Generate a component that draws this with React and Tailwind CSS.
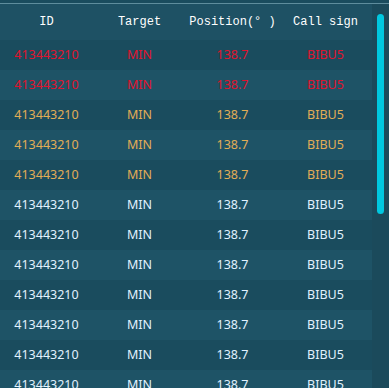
const ROWS = [
  ...Array(2).fill("red"),
  ...Array(3).fill("warn"),
  ...Array(7).fill("normal"),
];

const TEXT_STYLES = {
  red: "text-[#e0142d]",
  warn: "text-[#e3ad56]",
  normal: "text-[#e2f2ff]",
};

export default function App() {
  return (
    <div className="w-[389px] h-[388px] overflow-hidden bg-[#1a4c5e] pt-[3px]">
      <div className="h-px bg-[#5e8d9d]" />
      <div className="flex h-[384px]">
        <div className="w-[372px] overflow-hidden">
          <div className="grid grid-cols-4 h-[36px] items-center bg-[#1e5164] text-white text-[12px] font-['Liberation_Mono',monospace] text-center">
            <span>ID</span>
            <span>Target</span>
            <span>Position(° )</span>
            <span>Call sign</span>
          </div>
          {ROWS.map((kind, i) => (
            <div
              key={i}
              className={`grid grid-cols-4 h-[30px] items-center text-center text-[12.5px] font-['Noto_Sans',sans-serif] ${
                i % 2 === 0 ? "bg-[#1a4c5e]" : "bg-[#1e5366]"
              } ${TEXT_STYLES[kind]}`}
            >
              <span>413443210</span>
              <span>MIN</span>
              <span>138.7</span>
              <span>BIBU5</span>
            </div>
          ))}
        </div>
        <div className="flex-1 bg-[#1b4a5b] flex justify-center pt-[10px]">
          <div className="w-[7px] h-[200px] rounded-full bg-[#00c8e0]" />
        </div>
      </div>
    </div>
  );
}
